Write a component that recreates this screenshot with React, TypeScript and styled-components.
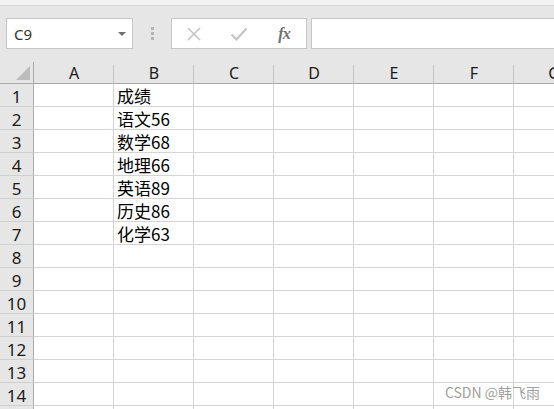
import React from 'react';
import styled, { createGlobalStyle } from 'styled-components';

const GlobalStyle = createGlobalStyle`
  html, body {
    margin: 0;
    padding: 0;
    background: #ffffff;
    overflow: hidden;
  }
  body {
    font-family: "Noto Sans CJK SC", "Noto Sans", sans-serif;
  }
`;

const Window = styled.div`
  position: relative;
  width: 554px;
  height: 409px;
  overflow: hidden;
  background: #ffffff;
`;

const TopStrip = styled.div`
  height: 5px;
  background: #f3f3f3;
  border-bottom: 1px solid #d6d6d6;
`;

const Toolbar = styled.div`
  height: 56px;
  box-sizing: border-box;
  padding: 12px 0 0 6px;
  background: #e6e6e6;
  display: flex;
  align-items: flex-start;
`;

const NameBox = styled.div`
  width: 127px;
  height: 31px;
  box-sizing: border-box;
  border: 1px solid #c6c6c6;
  background: #ffffff;
  display: flex;
  align-items: center;
  justify-content: space-between;
  padding: 0 6px 0 7px;
  font-family: "Noto Sans", "Liberation Sans", sans-serif;
  font-size: 15px;
  color: #333333;
`;

const Caret = styled.span`
  width: 0;
  height: 0;
  border-left: 4px solid transparent;
  border-right: 4px solid transparent;
  border-top: 4px solid #707070;
`;

const Grip = styled.div`
  width: 38px;
  height: 31px;
  display: flex;
  flex-direction: column;
  align-items: center;
  justify-content: center;
  gap: 2px;
`;

const GripDot = styled.span`
  width: 3px;
  height: 3px;
  background: #b4b4b4;
`;

const ActionBox = styled.div`
  width: 136px;
  height: 31px;
  box-sizing: border-box;
  border: 1px solid #c6c6c6;
  background: #ffffff;
  display: grid;
  grid-template-columns: 44px 46px 44px;
  align-items: center;
  justify-items: center;
`;

const Fx = styled.span`
  font-family: "Liberation Serif", "DejaVu Serif", serif;
  font-style: italic;
  font-weight: bold;
  font-size: 16px;
  color: #707070;
  letter-spacing: -1px;
`;

const FormulaInput = styled.div`
  flex: 1;
  height: 31px;
  margin-left: 4px;
  box-sizing: border-box;
  border: 1px solid #c6c6c6;
  border-right: none;
  background: #ffffff;
`;

const Sheet = styled.div`
  display: grid;
  grid-template-columns: 34px repeat(7, 80px);
  grid-auto-rows: 23px;
  grid-template-rows: 22px;
`;

const Corner = styled.div`
  position: relative;
  background: #e6e6e6;
  border-right: 1px solid #ababab;
  border-bottom: 1px solid #ababab;
  box-sizing: border-box;
  &::after {
    content: '';
    position: absolute;
    right: 3px;
    bottom: 3px;
    width: 0;
    height: 0;
    border-left: 14px solid transparent;
    border-bottom: 14px solid #bcbcbc;
  }
`;

const ColHead = styled.div`
  background: #e6e6e6;
  box-sizing: border-box;
  border-bottom: 1px solid #ababab;
  display: flex;
  align-items: center;
  justify-content: center;
  font-family: "Noto Sans", "Liberation Sans", sans-serif;
  font-size: 16px;
  color: #1a1a1a;
  position: relative;
  &::after {
    content: '';
    position: absolute;
    right: 0;
    top: 3px;
    bottom: 0;
    width: 1px;
    background: #c4c4c4;
  }
`;

const RowHead = styled.div`
  background: #e6e6e6;
  box-sizing: border-box;
  border-right: 1px solid #ababab;
  border-bottom: 1px solid #d0d0d0;
  display: flex;
  align-items: center;
  justify-content: center;
  padding-top: 2px;
  font-family: "Noto Sans", "Liberation Sans", sans-serif;
  font-size: 17px;
  color: #1a1a1a;
`;

const Cell = styled.div`
  box-sizing: border-box;
  border-right: 1px solid #d4d4d4;
  border-bottom: 1px solid #d4d4d4;
  padding: 0 0 0 3px;
  display: flex;
  align-items: flex-end;
  font-family: "Noto Sans CJK SC", "Noto Sans", sans-serif;
  font-size: 17px;
  line-height: 21px;
  color: #000000;
  white-space: nowrap;
  overflow: visible;
`;

const Watermark = styled.div`
  position: absolute;
  right: 14px;
  bottom: 7px;
  font-family: "Noto Sans CJK SC", "Noto Sans", sans-serif;
  font-size: 14px;
  color: #a0a0a0;
`;

const columns = ['A', 'B', 'C', 'D', 'E', 'F', 'G'];
const scores = ['成绩', '语文56', '数学68', '地理66', '英语89', '历史86', '化学63'];

function CrossIcon() {
  return (
    <svg width="16" height="16" viewBox="0 0 16 16">
      <path d="M2 2 L14 14 M14 2 L2 14" stroke="#c3c3c3" strokeWidth="1.6" fill="none" />
    </svg>
  );
}

function CheckIcon() {
  return (
    <svg width="18" height="16" viewBox="0 0 18 16">
      <path d="M1.5 8.5 L6.5 13.5 L16.5 2.5" stroke="#c3c3c3" strokeWidth="2.2" fill="none" />
    </svg>
  );
}

export default function App() {
  const rows = Array.from({ length: 15 }, (_, i) => i + 1);
  return (
    <Window>
      <GlobalStyle />
      <TopStrip />
      <Toolbar>
        <NameBox>
          <span>C9</span>
          <Caret />
        </NameBox>
        <Grip>
          <GripDot />
          <GripDot />
          <GripDot />
        </Grip>
        <ActionBox>
          <CrossIcon />
          <CheckIcon />
          <Fx>fx</Fx>
        </ActionBox>
        <FormulaInput />
      </Toolbar>
      <Sheet>
        <Corner />
        {columns.map((c) => (
          <ColHead key={c}>{c}</ColHead>
        ))}
        {rows.map((r) => (
          <React.Fragment key={r}>
            <RowHead>{r}</RowHead>
            {columns.map((c) => (
              <Cell key={c}>{c === 'B' && r <= scores.length ? scores[r - 1] : ''}</Cell>
            ))}
          </React.Fragment>
        ))}
      </Sheet>
      <Watermark>CSDN @韩飞雨</Watermark>
    </Window>
  );
}
